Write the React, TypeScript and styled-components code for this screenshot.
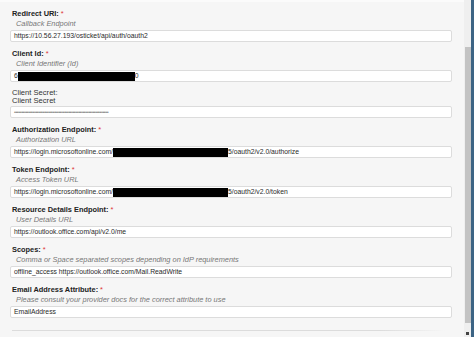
import React from 'react';
import styled, { createGlobalStyle } from 'styled-components';

const GlobalStyle = createGlobalStyle`
  html, body {
    margin: 0;
    padding: 0;
    background: #f6f6f6;
  }
  body {
    font-family: "Liberation Sans", Arial, sans-serif;
    color: #222;
  }
`;

const Root = styled.div`
  width: 474px;
  height: 337px;
  display: flex;
  overflow: hidden;
  background: #f6f6f6;
`;

const Content = styled.div`
  flex: 1;
  display: flex;
  flex-direction: column;
  padding: 7px 12px 0 10px;
  border-top: 2px solid #fbfbfb;
  box-sizing: border-box;
`;

const Field = styled.div`
  display: flex;
  flex-direction: column;
  margin-bottom: 7px;
`;

const Label = styled.div`
  font-size: 7.4px;
  font-weight: bold;
  line-height: 10px;
  padding-left: 2px;
  color: #222;
`;

const Required = styled.span`
  color: #d33;
  font-weight: normal;
  margin-left: 2px;
`;

const Hint = styled.div`
  font-size: 7.4px;
  font-style: italic;
  line-height: 10px;
  padding-left: 6px;
  color: #777;
`;

const PlainLabel = styled.div`
  font-size: 7.6px;
  line-height: 8px;
  padding-left: 2px;
  color: #333;
`;

const Input = styled.div`
  height: 12px;
  margin-top: 1px;
  box-sizing: border-box;
  background: #fff;
  border: 1px solid #dcdcdc;
  border-radius: 2px;
  padding: 0 3px;
  font-size: 6.8px;
  line-height: 10px;
  color: #2a2a2a;
  white-space: nowrap;
  overflow: hidden;
  display: flex;
  align-items: center;
`;

const Redacted = styled.span<{ $width: number }>`
  display: inline-block;
  width: ${p => p.$width}px;
  height: 9px;
  background: #000;
`;

const Dots = styled.span`
  letter-spacing: -0.5px;
  font-size: 5.5px;
  color: #888;
`;

const Divider = styled.div`
  margin-top: 5px;
  margin-left: 2px;
  height: 1px;
  background: linear-gradient(to right, #dcdcdc 85%, rgba(220, 220, 220, 0));
  width: 433px;
`;

const ScrollTrack = styled.div`
  width: 7px;
  background: #efefef;
  display: flex;
  flex-direction: column;
  align-items: stretch;
  padding: 47px 0 0 1px;
  box-sizing: border-box;
`;

const ScrollThumb = styled.div`
  height: 276px;
  background: #c3c3c3;
`;

const ScrollArrow = styled.div`
  margin-top: auto;
  margin-bottom: 2px;
  margin-left: 1px;
  width: 3px;
  height: 3px;
  background: #444;
`;

const Frame = styled.div`
  width: 3px;
  background: #3d6484;
`;

interface TextFieldProps {
  label: string;
  hint: string;
  children: React.ReactNode;
}

const TextField: React.FC<TextFieldProps> = ({ label, hint, children }) => (
  <Field>
    <Label>
      {label}
      <Required>*</Required>
    </Label>
    <Hint>{hint}</Hint>
    <Input>{children}</Input>
  </Field>
);

const App: React.FC = () => (
  <Root>
    <GlobalStyle />
    <Content>
      <TextField label="Redirect URI:" hint="Callback Endpoint">
        https://10.56.27.193/osticket/api/auth/oauth2
      </TextField>

      <TextField label="Client Id:" hint="Client Identifier (Id)">
        6<Redacted $width={117} />0
      </TextField>

      <Field>
        <PlainLabel>Client Secret:</PlainLabel>
        <PlainLabel>Client Secret</PlainLabel>
        <Input>
          <Dots>{'•'.repeat(66)}</Dots>
        </Input>
      </Field>

      <TextField label="Authorization Endpoint:" hint="Authorization URL">
        https://login.microsoftonline.com/<Redacted $width={115} />5/oauth2/v2.0/authorize
      </TextField>

      <TextField label="Token Endpoint:" hint="Access Token URL">
        https://login.microsoftonline.com/<Redacted $width={115} />5/oauth2/v2.0/token
      </TextField>

      <TextField label="Resource Details Endpoint:" hint="User Details URL">
        https://outlook.office.com/api/v2.0/me
      </TextField>

      <TextField
        label="Scopes:"
        hint="Comma or Space separated scopes depending on IdP requirements"
      >
        offline_access https://outlook.office.com/Mail.ReadWrite
      </TextField>

      <TextField
        label="Email Address Attribute:"
        hint="Please consult your provider docs for the correct attribute to use"
      >
        EmailAddress
      </TextField>

      <Divider />
    </Content>

    <ScrollTrack>
      <ScrollThumb />
      <ScrollArrow />
    </ScrollTrack>
    <Frame />
  </Root>
);

export default App;
